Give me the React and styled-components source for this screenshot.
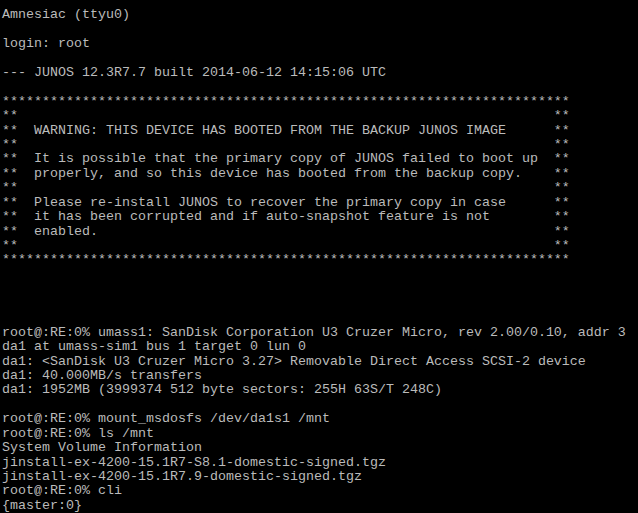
import React from 'react'
import styled, { createGlobalStyle } from 'styled-components'

const GlobalStyle = createGlobalStyle`
  html, body {
    margin: 0;
    padding: 0;
    background: #000;
  }
`

const STARS = '*'.repeat(71)
const box = (s = '') => ('**  ' + s).padEnd(69) + '**'

const lines = [
  'Amnesiac (ttyu0)',
  '',
  'login: root',
  '',
  '--- JUNOS 12.3R7.7 built 2014-06-12 14:15:06 UTC',
  '',
  STARS,
  box(),
  box('WARNING: THIS DEVICE HAS BOOTED FROM THE BACKUP JUNOS IMAGE'),
  box(),
  box('It is possible that the primary copy of JUNOS failed to boot up'),
  box('properly, and so this device has booted from the backup copy.'),
  box(),
  box('Please re-install JUNOS to recover the primary copy in case'),
  box('it has been corrupted and if auto-snapshot feature is not'),
  box('enabled.'),
  box(),
  STARS,
  '',
  '',
  '',
  '',
  'root@:RE:0% umass1: SanDisk Corporation U3 Cruzer Micro, rev 2.00/0.10, addr 3',
  'da1 at umass-sim1 bus 1 target 0 lun 0',
  'da1: <SanDisk U3 Cruzer Micro 3.27> Removable Direct Access SCSI-2 device',
  'da1: 40.000MB/s transfers',
  'da1: 1952MB (3999374 512 byte sectors: 255H 63S/T 248C)',
  '',
  'root@:RE:0% mount_msdosfs /dev/da1s1 /mnt',
  'root@:RE:0% ls /mnt',
  'System Volume Information',
  'jinstall-ex-4200-15.1R7-S8.1-domestic-signed.tgz',
  'jinstall-ex-4200-15.1R7.9-domestic-signed.tgz',
  'root@:RE:0% cli',
  '{master:0}',
]

function App() {
  return (
    <>
      <GlobalStyle />
      <Terminal>
        {lines.map((l, i) => (
          <Line key={i}>{l || ' '}</Line>
        ))}
      </Terminal>
    </>
  )
}

export default App

const Terminal = styled.div`
  width: 638px;
  height: 513px;
  box-sizing: border-box;
  padding: 8px 0 0 2px;
  background: #000;
  color: #bbbbbb;
  font-family: 'Liberation Mono', 'Courier New', monospace;
  font-size: 13.33px;
  line-height: 14.44px;
  overflow: hidden;
`

const Line = styled.div`
  white-space: pre;
  height: 14.44px;
`
